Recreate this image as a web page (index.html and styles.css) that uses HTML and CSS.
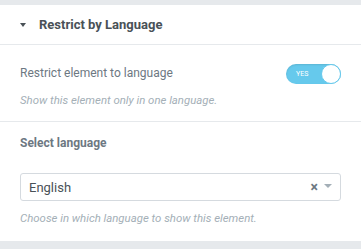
FILE: index.html
```html
<!DOCTYPE html>
<html lang="en">
<head>
    <meta charset="UTF-8">
    <meta name="viewport" content="width=device-width, initial-scale=1.0">
    <title>Restrict by Language</title>
    <link rel="stylesheet" href="styles.css">
</head>
<body>
    <div class="panel">
        <div class="section-head">
            <span class="caret"></span>
            <span class="section-title">Restrict by Language</span>
        </div>
        <div class="control">
            <div class="control-row">
                <label class="control-label">Restrict element to language</label>
                <span class="switch">
                    <span class="switch-text">YES</span>
                    <span class="switch-knob"></span>
                </span>
            </div>
            <div class="control-help">Show this element only in one language.</div>
        </div>
        <div class="control last">
            <label class="control-label bold">Select language</label>
            <div class="select-box">
                <span class="select-value">English</span>
                <span class="select-clear">&times;</span>
                <span class="select-arrow"></span>
            </div>
            <div class="control-help">Choose in which language to show this element.</div>
        </div>
    </div>
</body>
</html>
```

FILE: styles.css
```css
body {
    margin: 0;
    padding: 5px 0 0 0;
    background-color: #e6e9ec;
    font-family: Roboto, Arial, sans-serif;
    height: 249px;
    box-sizing: border-box;
    overflow: hidden;
}
.panel {
    background-color: #fff;
    height: 236px;
}
.section-head {
    height: 39px;
    display: flex;
    align-items: center;
    padding-left: 20px;
    border-bottom: 1px solid #e6e9ec;
}
.caret {
    width: 0;
    height: 0;
    border-left: 3.5px solid transparent;
    border-right: 3.5px solid transparent;
    border-top: 4px solid #495157;
    margin-right: 13px;
    margin-top: 1px;
}
.section-title {
    font-size: 13px;
    font-weight: bold;
    color: #495157;
}
.control {
    padding: 18px 20px 14px 20px;
    border-bottom: 1px solid #e6e9ec;
}
.control.last {
    padding-top: 11px;
    border-bottom: none;
}
.control-row {
    display: flex;
    align-items: center;
    justify-content: space-between;
    height: 20px;
}
.control-label {
    display: block;
    font-size: 12px;
    line-height: 20px;
    color: #6d7882;
}
.control-label.bold {
    font-weight: bold;
    color: #6d7882;
}
.switch {
    position: relative;
    width: 55px;
    height: 20px;
    border-radius: 10px;
    background-color: #66c9ec;
    box-shadow: inset 0 1px 2px rgba(0, 0, 0, 0.1);
    margin-top: 2px;
}
.switch-text {
    position: absolute;
    left: 10px;
    top: 0;
    line-height: 20px;
    font-size: 7px;
    color: #fff;
}
.switch-knob {
    position: absolute;
    right: 0;
    top: 0;
    width: 18px;
    height: 18px;
    border-radius: 50%;
    background-color: #fff;
    border: 1px solid #66c9ec;
}
.control-help {
    margin-top: 10px;
    font-size: 11.4px;
    line-height: 14px;
    font-style: italic;
    color: #a4afb7;
}
.select-box {
    margin-top: 20px;
    height: 28px;
    box-sizing: border-box;
    border: 1px solid #d5dadf;
    border-radius: 3px;
    display: flex;
    align-items: center;
    padding: 0 8px 0 8px;
}
.select-value {
    flex: 1;
    font-size: 13px;
    color: #495157;
}
.select-clear {
    font-size: 14px;
    font-weight: bold;
    color: #6d7882;
    margin-right: 6px;
}
.select-arrow {
    width: 0;
    height: 0;
    border-left: 4px solid transparent;
    border-right: 4px solid transparent;
    border-top: 4px solid #a4afb7;
    margin-bottom: 3px;
}
```
